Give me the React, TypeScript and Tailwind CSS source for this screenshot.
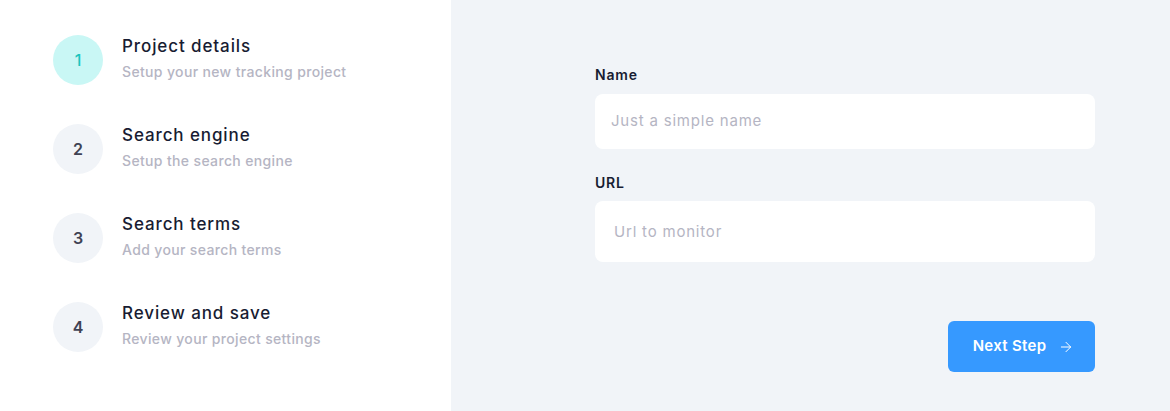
import React from "react";
import { ArrowRight } from "lucide-react";

const steps = [
  { n: 1, title: "Project details", sub: "Setup your new tracking project", active: true },
  { n: 2, title: "Search engine", sub: "Setup the search engine" },
  { n: 3, title: "Search terms", sub: "Add your search terms" },
  { n: 4, title: "Review and save", sub: "Review your project settings" },
];

const App: React.FC = () => {
  return (
    <div className="flex w-[1170px] h-[411px] bg-white font-['Inter',sans-serif]">
      {/* Left - Steps */}
      <div className="w-[451px] shrink-0 bg-white pl-[53px] pt-[35px] flex flex-col gap-[39px]">
        {steps.map((s) => (
          <div key={s.n} className="flex items-center gap-[19px]">
            <div
              className={
                s.active
                  ? "w-[50px] h-[50px] rounded-full bg-[#c9f7f5] text-[#1bc5bd] flex items-center justify-center text-[16px] font-medium"
                  : "w-[50px] h-[50px] rounded-full bg-[#f1f4f8] text-[#3f4254] flex items-center justify-center text-[16px] font-semibold"
              }
            >
              {s.n}
            </div>
            <div className="flex flex-col -mt-[4px]">
              <span className="text-[17px] leading-[24px] font-medium tracking-[0.9px] text-[#181c32]">{s.title}</span>
              <span className="text-[14px] leading-[20px] mt-[4px] font-medium tracking-[0.35px] text-[#b5b5c3]">{s.sub}</span>
            </div>
          </div>
        ))}
      </div>

      {/* Right - Form */}
      <div className="flex-1 bg-[#f1f4f8] pl-[144px] pt-[65px]">
        <div className="w-[500px] flex flex-col">
          <label className="text-[14px] leading-[20px] font-semibold tracking-[0.8px] text-[#181c32]">Name</label>
          <input
            type="text"
            placeholder="Just a simple name"
            className="mt-[9px] h-[55px] rounded-lg bg-white px-4 pb-[2px] text-[15px] tracking-[0.8px] outline-none text-[#3f4254] placeholder-[#b5b5c3]"
          />
          <label className="mt-[24px] text-[14px] leading-[20px] font-semibold tracking-[0.8px] text-[#181c32]">URL</label>
          <input
            type="text"
            placeholder="Url to monitor"
            className="mt-[8px] h-[61px] rounded-lg bg-white px-[19px] text-[15px] tracking-[0.8px] outline-none text-[#3f4254] placeholder-[#b5b5c3]"
          />
          <div className="flex justify-end mt-[59px]">
            <button className="w-[147px] h-[51px] rounded-md bg-[#3699ff] text-white text-[15px] font-semibold tracking-[0.3px] flex items-center justify-center gap-[12px] pl-[4px]">
              <span>Next Step</span>
              <ArrowRight size={16} strokeWidth={1.5} />
            </button>
          </div>
        </div>
      </div>
    </div>
  );
};

export default App;
